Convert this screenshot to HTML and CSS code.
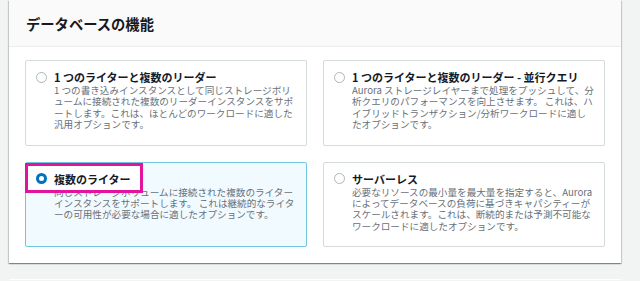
FILE: index.html
```html
<!DOCTYPE html>
<html lang="ja">
<head>
<meta charset="utf-8">
<link rel="stylesheet" href="styles.css">
</head>
<body>
<div class="panel">
  <div class="panel-header"><h2 class="panel-title">データベースの機能</h2></div>
  <div class="panel-body">
    <div class="options">
      <label class="card">
        <div class="card-head"><span class="radio"></span><span class="card-title">1 つのライターと複数のリーダー</span></div>
        <p class="card-desc">1 つの書き込みインスタンスとして同じストレージボリ<br>ュームに接続された複数のリーダーインスタンスをサポ<br>ートします。これは、ほとんどのワークロードに適した<br>汎用オプションです。</p>
      </label>
      <label class="card">
        <div class="card-head"><span class="radio"></span><span class="card-title">1 つのライターと複数のリーダー - 並行クエリ</span></div>
        <p class="card-desc">Aurora ストレージレイヤーまで処理をプッシュして、分<br>析クエリのパフォーマンスを向上させます。 これは、ハ<br>イブリッドトランザクション/分析ワークロードに適し<br>たオプションです。</p>
      </label>
      <label class="card selected">
        <span class="highlight"></span>
        <div class="card-head"><span class="radio checked"></span><span class="card-title">複数のライター</span></div>
        <p class="card-desc">同じストレージボリュームに接続された複数のライター<br>インスタンスをサポートします。 これは継続的なライタ<br>ーの可用性が必要な場合に適したオプションです。</p>
      </label>
      <label class="card">
        <div class="card-head"><span class="radio"></span><span class="card-title">サーバーレス</span></div>
        <p class="card-desc">必要なリソースの最小量を最大量を指定すると、Aurora<br>によってデータベースの負荷に基づきキャパシティーが<br>スケールされます。これは、断続的または予測不可能な<br>ワークロードに適したオプションです。</p>
      </label>
    </div>
  </div>
</div>
<div class="panel next"></div>
</body>
</html>
```
FILE: styles.css
```css
html, body {
  margin: 0;
  padding: 0;
  background: #f2f3f3;
  font-family: "Noto Sans CJK JP", "Noto Sans", sans-serif;
}
.panel {
  margin-left: 9px;
  width: 612px;
  background: #fff;
  box-shadow: 0 1px 1px 0 rgba(0, 28, 36, 0.3), 1px 1px 1px 0 rgba(0, 28, 36, 0.15), -1px 1px 1px 0 rgba(0, 28, 36, 0.15);
}
.panel-header {
  height: 47px;
  background: #fafafa;
  border-bottom: 1px solid #eaeded;
  display: flex;
  align-items: center;
  padding-left: 17px;
  box-sizing: border-box;
}
.panel-title {
  margin: 0;
  font-size: 14.3px;
  font-weight: 700;
  color: #16191f;
  line-height: 20px;
  padding-top: 1px;
}
.panel-body {
  padding: 13px 16px 16px 16px;
}
.options {
  display: grid;
  grid-template-columns: 1fr 1fr;
  gap: 16px;
}
.card {
  position: relative;
  display: block;
  border: 1px solid #d5dbdb;
  border-radius: 2px;
  padding: 9px 10px 14px 10px;
  background: #fff;
}
.card.selected {
  background: #f1faff;
  border-color: #72c7e0;
}
.card-head {
  position: relative;
  z-index: 2;
  display: flex;
  align-items: center;
  height: 14px;
}
.radio {
  box-sizing: border-box;
  width: 11px;
  height: 11px;
  border-radius: 50%;
  border: 1px solid #aab7b8;
  background: #fff;
  margin-right: 7px;
  flex: none;
}
.radio.checked {
  border: 3px solid #0073bb;
}
.card-title {
  font-size: 11px;
  font-weight: 700;
  color: #16191f;
  line-height: 14px;
  white-space: nowrap;
}
.card-desc {
  margin: 1px 0 0 18px;
  font-size: 9.6px;
  line-height: 11.4px;
  color: #687078;
  white-space: nowrap;
}
.highlight {
  position: absolute;
  z-index: 1;
  left: -1px;
  top: 0;
  width: 118px;
  height: 30px;
  box-sizing: border-box;
  border: 3px solid #e2139e;
  background: #fff;
}
.panel.next {
  margin-top: 16px;
  height: 1px;
}
```
